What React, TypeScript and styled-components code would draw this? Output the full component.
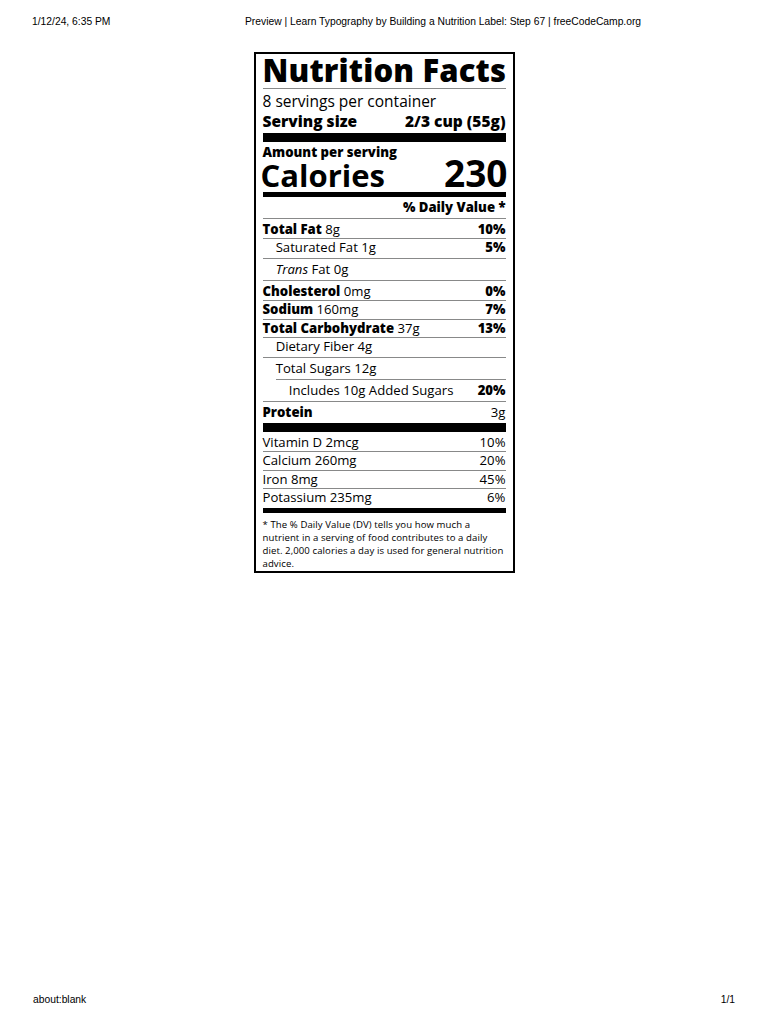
import React from 'react';
import styled, { createGlobalStyle } from 'styled-components';

const GlobalStyle = createGlobalStyle`
  *, *::before, *::after { box-sizing: border-box; }
  html, body { margin: 0; padding: 0; background: #ffffff; }
  body { font-family: 'Open Sans', 'DejaVu Sans', sans-serif; color: #000000; }
`;

const Page = styled.div`
  min-height: 1024px;
  display: flex;
  flex-direction: column;
`;

const PrintHeader = styled.header`
  display: grid;
  grid-template-columns: 213px auto;
  align-items: center;
  height: 44px;
  padding: 0 32px;
  font-family: 'Liberation Sans', Arial, sans-serif;
  font-size: 10.3px;
  line-height: 12px;
  color: #000000;
  white-space: nowrap;
`;

const PrintFooter = styled.footer`
  margin-top: auto;
  display: flex;
  justify-content: space-between;
  align-items: center;
  height: 48px;
  padding: 0 33px;
  font-family: 'Liberation Sans', Arial, sans-serif;
  font-size: 10.3px;
  line-height: 12px;
  color: #000000;
`;

const Label = styled.section`
  width: 261px;
  margin: 8px auto 0;
  border: 2px solid #000000;
  padding: 0 7px;
`;

const Title = styled.h1`
  margin: 0;
  font-size: 31px;
  line-height: 32px;
  font-weight: 800;
  letter-spacing: 0.15px;
  text-align: center;
  white-space: nowrap;
`;

type DividerKind = 'thin' | 'lg' | 'md';

const Divider = styled.div<{ $kind?: DividerKind; $indent?: number }>`
  margin: ${(p) => (p.$kind && p.$kind !== 'thin' ? '2px' : '1.75px')} 0 ${(p) =>
      p.$kind && p.$kind !== 'thin' ? '2px' : '1.75px'}
    ${(p) => (p.$indent ?? 0) * 13.15}px;
  height: ${(p) => (p.$kind === 'lg' ? '9px' : p.$kind === 'md' ? '4.8px' : '1px')};
  background: ${(p) => (p.$kind && p.$kind !== 'thin' ? '#000000' : '#888989')};
`;

const HeaderLine = styled.p<{ $bold?: boolean }>`
  display: flex;
  justify-content: space-between;
  margin: 0;
  font-size: 15.5px;
  line-height: 20px;
  font-weight: ${(p) => (p.$bold ? 800 : 400)};
`;

const CaloriesInfo = styled.div`
  display: flex;
  justify-content: space-between;
  align-items: flex-end;
`;

const LeftContainer = styled.div`
  display: flex;
  flex-direction: column;
`;

const AmountHeading = styled.h2`
  margin: 0;
  font-size: 13.15px;
  line-height: 17.35px;
  font-weight: 800;
`;

const CaloriesLabel = styled.p`
  margin: 0 -2px;
  font-size: 31px;
  line-height: 29.5px;
  font-weight: 700;
`;

const CaloriesValue = styled.span`
  margin: -6.8px -2px;
  font-size: 37px;
  line-height: 48px;
  font-weight: 700;
`;

const DailyValue = styled.div`
  font-size: 13.15px;
`;

const Row = styled.p<{ $indent?: number; $ruled?: boolean; $right?: boolean; $bold?: boolean }>`
  display: flex;
  justify-content: ${(p) => (p.$right ? 'flex-end' : 'space-between')};
  margin: 0 0 0 ${(p) => (p.$indent ?? 0) * 13.15}px;
  font-size: 13.15px;
  line-height: 17.35px;
  font-weight: ${(p) => (p.$bold ? 800 : 400)};
  border-bottom: ${(p) => (p.$ruled ? '1px solid #888989' : '0')};
`;

const Strong = styled.span`
  font-weight: 800;
`;

const Note = styled.p`
  margin: 4.8px 0 1.5px;
  font-size: 9.6px;
  line-height: 13px;
  letter-spacing: 0.08px;
`;

type Vitamin = { name: string; dv: string };

const vitamins: Vitamin[] = [
  { name: 'Vitamin D 2mcg', dv: '10%' },
  { name: 'Calcium 260mg', dv: '20%' },
  { name: 'Iron 8mg', dv: '45%' },
  { name: 'Potassium 235mg', dv: '6%' },
];

export default function App() {
  return (
    <>
      <GlobalStyle />
      <Page>
        <PrintHeader>
          <span>1/12/24, 6:35 PM</span>
          <span>Preview | Learn Typography by Building a Nutrition Label: Step 67 | freeCodeCamp.org</span>
        </PrintHeader>

        <Label>
          <header>
            <Title>Nutrition Facts</Title>
            <Divider />
            <HeaderLine>8 servings per container</HeaderLine>
            <HeaderLine $bold>
              Serving size <span>2/3 cup (55g)</span>
            </HeaderLine>
          </header>
          <Divider $kind="lg" />
          <CaloriesInfo>
            <LeftContainer>
              <AmountHeading>Amount per serving</AmountHeading>
              <CaloriesLabel>Calories</CaloriesLabel>
            </LeftContainer>
            <CaloriesValue>230</CaloriesValue>
          </CaloriesInfo>
          <Divider $kind="md" />
          <DailyValue>
            <Row $bold $right>% Daily Value *</Row>
            <Divider />
            <Row $ruled>
              <span>
                <Strong>Total Fat</Strong> 8g
              </span>
              <Strong>10%</Strong>
            </Row>
            <Row $indent={1}>
              Saturated Fat 1g <Strong>5%</Strong>
            </Row>
            <Divider />
            <Row $indent={1}>
              <span>
                <i>Trans</i> Fat 0g
              </span>
            </Row>
            <Divider />
            <Row $ruled>
              <span>
                <Strong>Cholesterol</Strong> 0mg
              </span>
              <Strong>0%</Strong>
            </Row>
            <Row $ruled>
              <span>
                <Strong>Sodium</Strong> 160mg
              </span>
              <Strong>7%</Strong>
            </Row>
            <Row $ruled>
              <span>
                <Strong>Total Carbohydrate</Strong> 37g
              </span>
              <Strong>13%</Strong>
            </Row>
            <Row $indent={1}>Dietary Fiber 4g</Row>
            <Divider />
            <Row $indent={1}>Total Sugars 12g</Row>
            <Divider $indent={1} />
            <Row $indent={2}>
              Includes 10g Added Sugars <Strong>20%</Strong>
            </Row>
            <Divider />
            <Row>
              <Strong>Protein</Strong> <span>3g</span>
            </Row>
            <Divider $kind="lg" />
            {vitamins.map((v, i) => (
              <Row key={v.name} $ruled={i < vitamins.length - 1}>
                {v.name} <span>{v.dv}</span>
              </Row>
            ))}
            <Divider $kind="md" />
            <Note>
              * The % Daily Value (DV) tells you how much a nutrient in a serving of food contributes to a
              daily diet. 2,000 calories a day is used for general nutrition advice.
            </Note>
          </DailyValue>
        </Label>

        <PrintFooter>
          <span>about:blank</span>
          <span>1/1</span>
        </PrintFooter>
      </Page>
    </>
  );
}
